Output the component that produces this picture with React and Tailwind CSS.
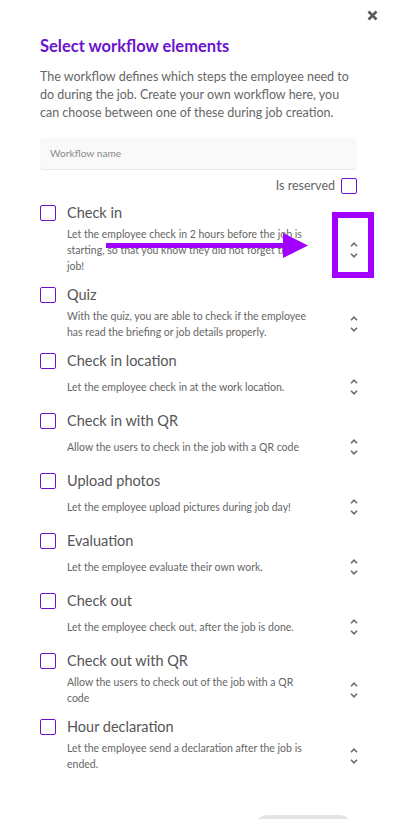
import React from "react";

const items = [
  { t: "Check in", d: "Let the employee check in 2 hours before the job is starting, so that you know they did not forget the job!" },
  { t: "Quiz", d: "With the quiz, you are able to check if the employee has read the briefing or job details properly." },
  { t: "Check in location", d: "Let the employee check in at the work location." },
  { t: "Check in with QR", d: "Allow the users to check in the job with a QR code" },
  { t: "Upload photos", d: "Let the employee upload pictures during job day!" },
  { t: "Evaluation", d: "Let the employee evaluate their own work." },
  { t: "Check out", d: "Let the employee check out, after the job is done." },
  { t: "Check out with QR", d: "Allow the users to check out of the job with a QR code" },
  { t: "Hour declaration", d: "Let the employee send a declaration after the job is ended." },
];

function Chevrons() {
  return (
    <div className="-mr-[1px] flex h-[26px] w-[8px] flex-col items-center justify-center gap-[6px]">
      <svg width="8" height="5" viewBox="0 0 8 5" fill="none">
        <path d="M1 4.2 L4 1.2 L7 4.2" stroke="#6b6b6b" strokeWidth="1.6" />
      </svg>
      <svg width="8" height="5" viewBox="0 0 8 5" fill="none">
        <path d="M1 0.8 L4 3.8 L7 0.8" stroke="#6b6b6b" strokeWidth="1.6" />
      </svg>
    </div>
  );
}

function Box() {
  return <div className="h-[16px] w-[16px] shrink-0 rounded-[2px] border-[1.5px] border-[#6a13cf] bg-white" />;
}

export default function App() {
  return (
    <div
      className="relative h-[819px] w-[396px] overflow-hidden bg-white"
      style={{ fontFamily: "Lato, 'Open Sans', sans-serif" }}
    >
      <div className="flex h-[30px] items-center justify-end pr-[18px]">
        <svg width="11" height="11" viewBox="0 0 11 11">
          <path d="M1.5 1.5 L9.5 9.5 M9.5 1.5 L1.5 9.5" stroke="#5a5a5a" strokeWidth="2.6" />
        </svg>
      </div>
      <div className="pl-[40px] pr-[39px]">
        <h1 className="mt-[4px] text-[16.5px] font-bold leading-[24px] text-[#6a13cf]">Select workflow elements</h1>
        <p className="mt-[10px] text-[12.5px] leading-[18px] text-[#666]">
          The workflow defines which steps the employee need to do during the job. Create your own workflow here, you can choose between one of these during job creation.
        </p>
        <div className="mt-[16px] flex h-[31px] items-center rounded-[4px] bg-[#f9f9f9] pl-[10px] shadow-[0_1px_0_#e6e6e6]">
          <span className="text-[10.2px] text-[#8a8a8a]">Workflow name</span>
        </div>
        <div className="mt-[9px] flex h-[16px] items-center justify-end gap-[6px]">
          <span className="text-[12.5px] text-[#666]">Is reserved</span>
          <Box />
        </div>
        <div className="mt-[9px] flex flex-col gap-[11px]">
          {items.map((it) => (
            <div key={it.t} className="flex flex-col gap-[3px]">
              <div className="flex h-[20px] items-center gap-[11px]">
                <Box />
                <span className="text-[14.5px] leading-[20px] text-[#555]">{it.t}</span>
              </div>
              <div className="flex items-center justify-between pl-[27px]">
                <p className="w-[243px] text-[10.5px] leading-[16px] text-[#666]">{it.d}</p>
                <Chevrons />
              </div>
            </div>
          ))}
        </div>
        <div className="mt-[43px] flex justify-end pr-[3px]">
          <div className="h-[30px] w-[101px] rounded-full bg-[#e4e4e4]" />
        </div>
      </div>

      {/* annotation arrow */}
      <div className="absolute left-[106px] top-[243px] h-[5px] w-[180px] bg-[#a100ff]" />
      <svg className="absolute left-[283px] top-[233px]" width="25" height="25" viewBox="0 0 25 25">
        <polygon points="0,0 25,12.5 0,25" fill="#a100ff" />
      </svg>
      {/* annotation box */}
      <div className="absolute left-[332px] top-[212px] h-[66px] w-[42px] border-[6px] border-[#a100ff]" />
    </div>
  );
}
